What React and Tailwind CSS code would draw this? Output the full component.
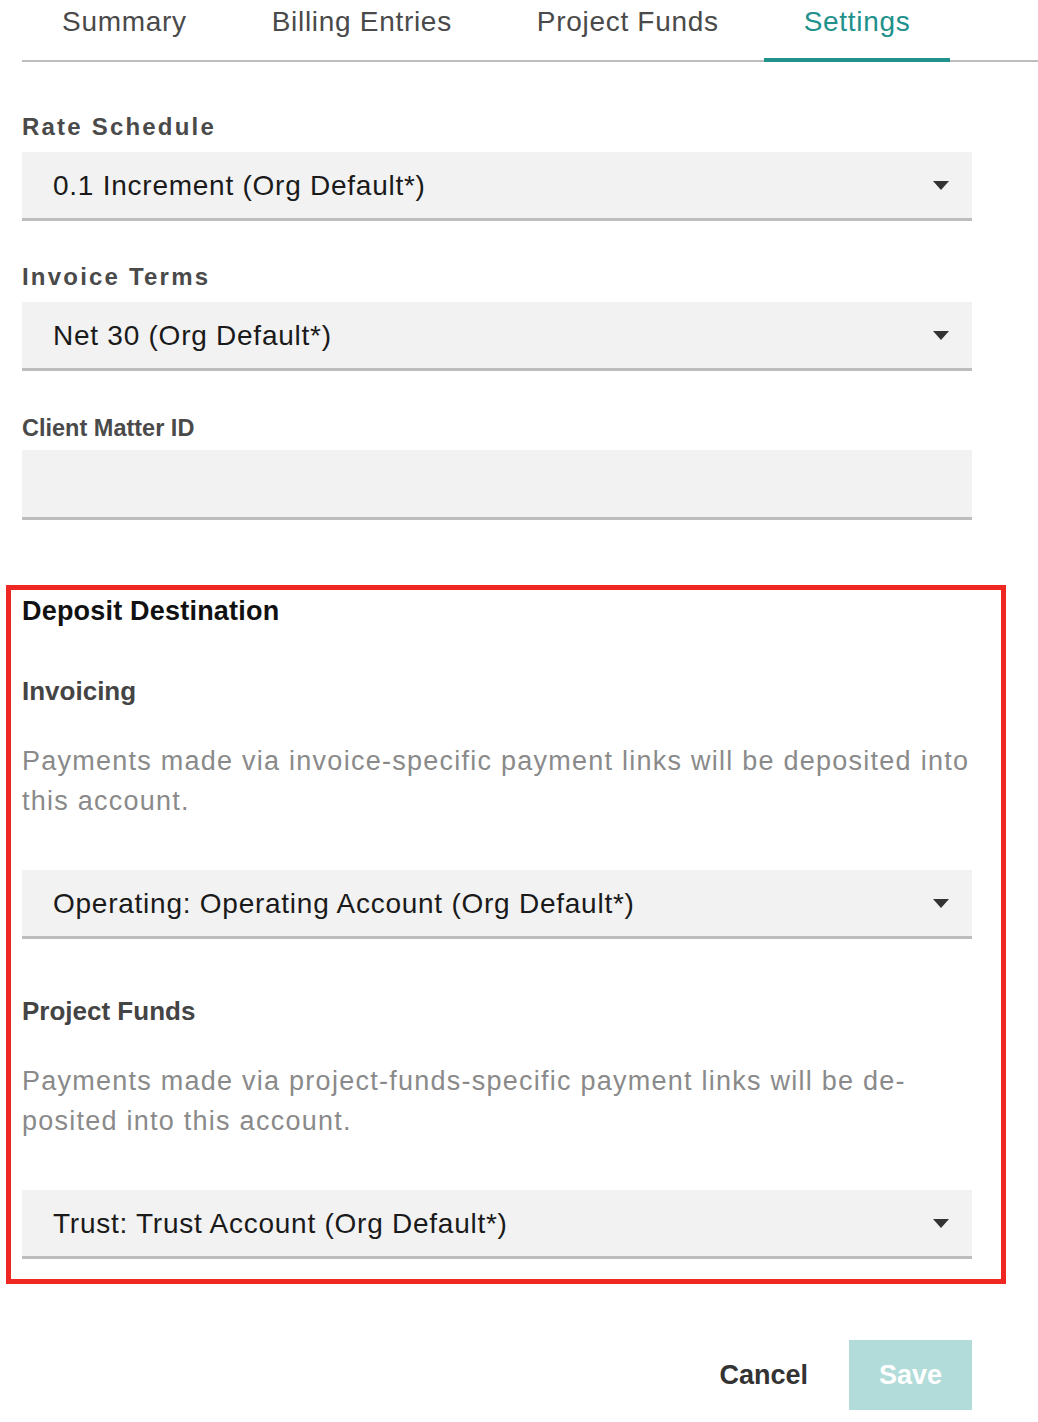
import React from "react";

const tabs = ["Summary", "Billing Entries", "Project Funds", "Settings"];

function Caret() {
  return (
    <svg width="16" height="9" viewBox="0 0 16 9" className="shrink-0">
      <path d="M0 0 L16 0 L8 9 Z" fill="#333333" />
    </svg>
  );
}

function Select({ value }) {
  return (
    <div className="flex h-[69px] w-[950px] items-center justify-between border-b-[3px] border-[#bdbdbd] bg-[#f2f2f2] pl-[31px] pr-[23px]">
      <span className="pt-[2px] text-[28px] leading-[32px] tracking-[0.75px] text-[#1a1a1a]">{value}</span>
      <Caret />
    </div>
  );
}

function Label({ children, className = "" }) {
  return (
    <div className={"text-[24px] font-bold leading-[28px] tracking-[2.2px] text-[#4a4a4a] " + className}>
      {children}
    </div>
  );
}

export default function App() {
  return (
    <div className="min-h-screen bg-white pl-[22px] font-['Liberation_Sans',Arial,sans-serif]">
      {/* Tabs */}
      <div className="flex gap-[5px] border-b-2 border-[#bdbdbd]">
        {tabs.map((t) => (
          <div
            key={t}
            className={
              "-mb-[2px] h-[62px] border-b-4 px-[40px] text-[28px] leading-[44px] tracking-[0.7px] " +
              (t === "Settings" ? "border-[#21918b] text-[#21918b]" : "border-transparent text-[#4a4a4a]")
            }
          >
            {t}
          </div>
        ))}
      </div>

      <Label className="mt-[51px] mb-[11px]">Rate Schedule</Label>
      <Select value="0.1 Increment (Org Default*)" />

      <Label className="mt-[42px] mb-[11px]">Invoice Terms</Label>
      <Select value="Net 30 (Org Default*)" />

      <div className="mt-[43px] mb-[8px] text-[23.5px] font-bold leading-[28px] text-[#4a4a4a]">Client Matter ID</div>
      <div className="h-[70px] w-[950px] border-b-[3px] border-[#bdbdbd] bg-[#f2f2f2]" />

      {/* Deposit Destination */}
      <div className="mt-[65px] -ml-[16px] w-[1000px] border-[5px] border-[#ee2722] pl-[11px] pt-[5px] pb-[20px]">
        <div className="text-[27px] font-bold leading-[32px] tracking-[0.2px] text-[#111111]">Deposit Destination</div>

        <div className="mt-[48px] text-[26px] font-bold leading-[32px] text-[#444444]">Invoicing</div>
        <p className="mt-[34px] w-[950px] text-[27px] leading-[40px] tracking-[1.25px] text-[#8a8a8a]">
          Payments made via invoice-specific payment links will be deposited into this account.
        </p>
        <div className="mt-[49px]">
          <Select value="Operating: Operating Account (Org Default*)" />
        </div>

        <div className="mt-[56px] text-[26px] font-bold leading-[32px] text-[#444444]">Project Funds</div>
        <p className="mt-[34px] w-[950px] text-[27px] leading-[40px] tracking-[1.25px] text-[#8a8a8a]">
          Payments made via project-funds-specific payment links will be de{"\u00AD"}posited into this account.
        </p>
        <div className="mt-[49px]">
          <Select value="Trust: Trust Account (Org Default*)" />
        </div>
      </div>

      {/* Actions */}
      <div className="mt-[56px] flex w-[950px] justify-end gap-[1px] pb-[12px]">
        <button className="h-[70px] px-[40px] text-[27px] font-bold text-[#333333]">Cancel</button>
        <button className="h-[70px] w-[123px] bg-[#b2dcd9] text-[27px] font-bold text-white">Save</button>
      </div>
    </div>
  );
}
